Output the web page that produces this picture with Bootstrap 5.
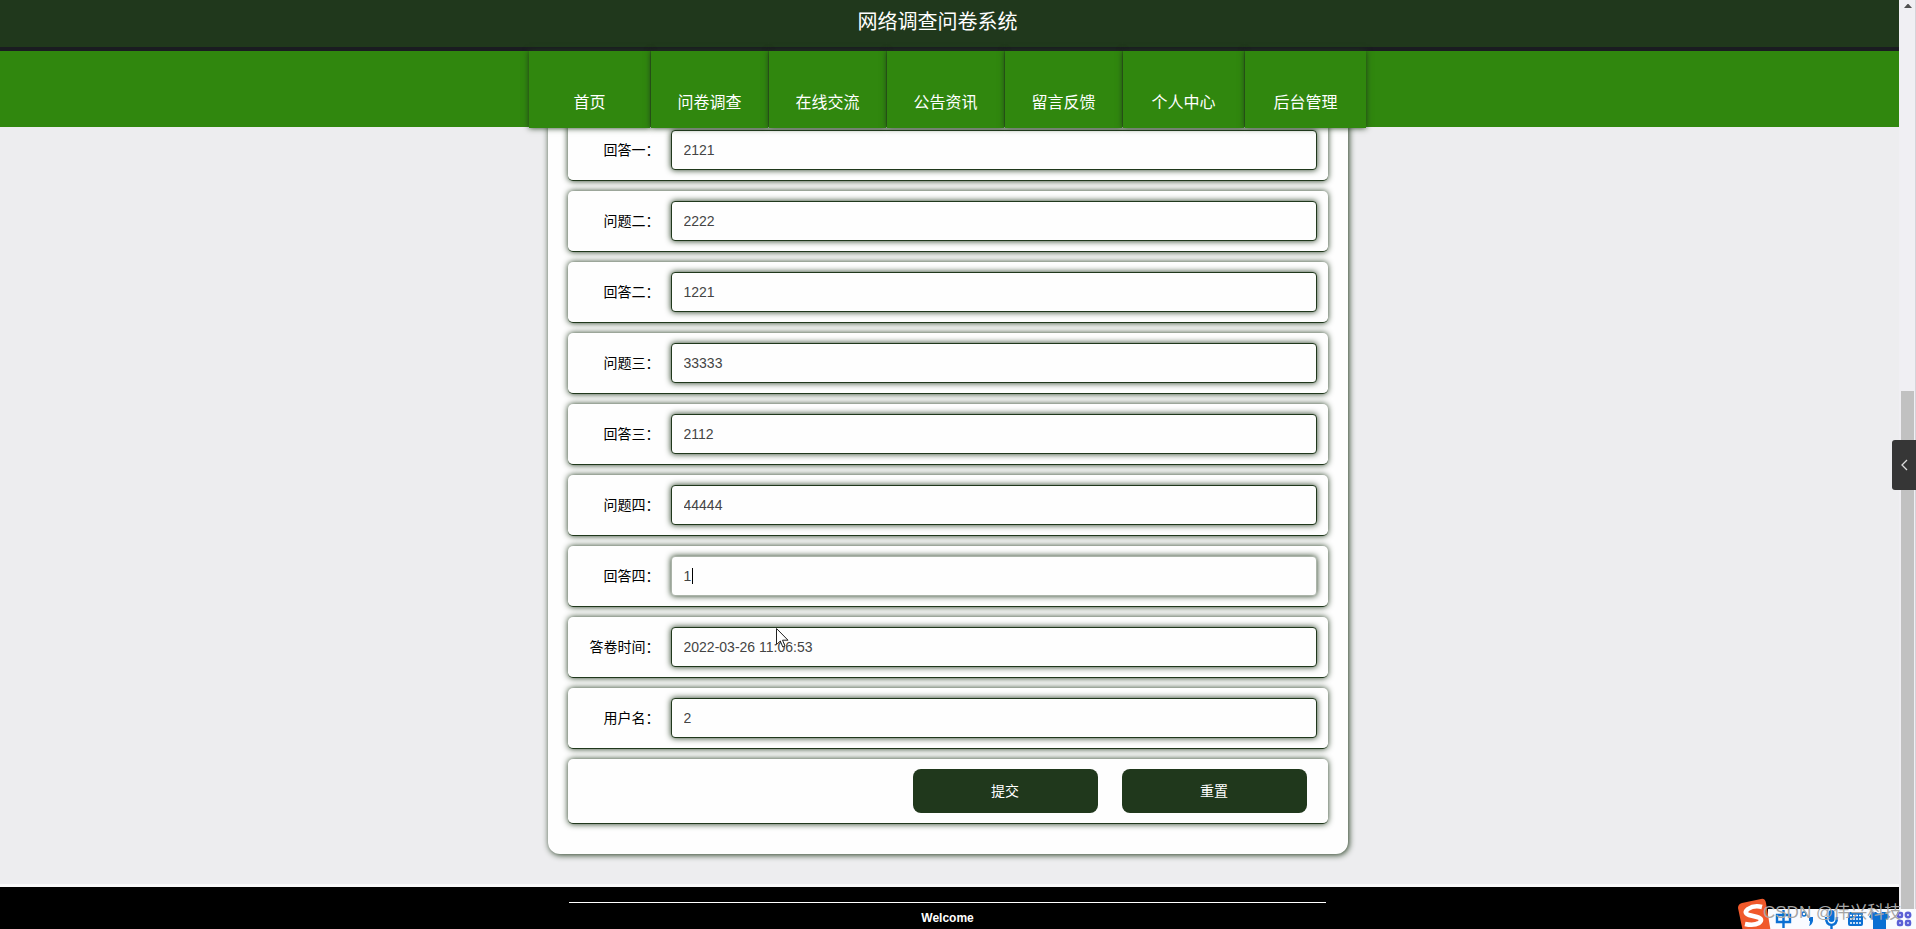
<!DOCTYPE html>
<html lang="zh-CN">
<head>
<meta charset="utf-8">
<meta name="viewport" content="width=device-width, initial-scale=1">
<title>网络调查问卷系统</title>
<link rel="stylesheet" href="https://cdn.jsdelivr.net/npm/bootstrap@5.3.0/dist/css/bootstrap.min.css">
<style>
:root { --forest: #20381c; --leaf: #30870e; }
body { font-family: "Liberation Sans", "Noto Sans CJK SC", sans-serif; font-size: 14px; line-height: 20px; color: #000; background: #ededef; }
.page-col { min-width: 0; }
.top-zone { z-index: 5; }
.site-title { background: var(--forest); border-bottom: 4px solid #1a1c21; height: 51px; font-size: 20px; line-height: 44px; padding-right: 24px; color: #fff; }
.site-nav { background: var(--leaf); height: 76px; }
.site-nav ul { gap: 1px; }
.site-nav a { display: block; min-width: 117px; height: 77px; padding: 40px 26px 0; font-size: 16px; line-height: 24px; text-align: center; color: #fff; text-decoration: none; background: var(--leaf); box-shadow: 0 0 6px var(--forest); }
.site-nav .wide-item a { min-width: 121px; }
.survey-card { width: 800px; max-width: 100%; margin-top: -8px; padding: 1px 20px 30px; background: #fefefe; border-radius: 0 0 12px 12px; box-shadow: 1px 1px 6px var(--forest); }
.survey-form { gap: 10px; }
.field-row { padding: 10px 11px 10px 0; background: #fefefe; border-bottom: 1px solid var(--forest); border-radius: 5px; box-shadow: 0 0 6px var(--forest); }
.field-row label { width: 92px; margin-right: 11px; text-align: right; flex: none; }
.field-row input { height: 40px; padding: 0 12px; font-size: 14px; color: #444; border: 1px solid var(--forest); border-radius: 4px; box-shadow: 0 0 6px var(--forest); background: #fefefe; min-width: 0; outline: 0; }
.field-row input.editing { border-color: #aab3a8; }
.field-row .cell { position: relative; display: flex; flex: 1; min-width: 0; }
.caret { position: absolute; left: 21px; top: 12px; width: 1px; height: 16px; background: #000; }
.pointer { position: absolute; left: 105px; top: 1px; }
.action-row { gap: 24px; padding-right: 21px; }
.action-row button { width: 185px; height: 44px; border: 0; border-radius: 8px; background: var(--forest); color: #fff; font-size: 14px; }
.site-foot { margin-top: 30px; border-top: 3px solid #fafafa; background: #000; color: #fff; font-size: 12px; font-weight: bold; }
.foot-rule { width: 757px; max-width: 100%; height: 1px; margin: 15px auto 5px; background: #fff; }
.scroll-track { width: 17px; flex: none; background: #f0eff3; border-right: 1px solid #d5d3d9; padding: 3px 1px 0 2px; }
.scroll-thumb { margin-top: 383px; background: #c1c1c1; }
.drawer-tab { position: absolute; right: 0; top: 440px; width: 24px; height: 50px; border: 0; padding: 0; border-radius: 3px 0 0 3px; background: #363636; z-index: 9; }
.ime { position: absolute; right: 0; bottom: 0; z-index: 8; }
</style>
</head>
<body>
<div class="d-flex vh-100 overflow-hidden position-relative">
  <div class="page-col flex-grow-1 d-flex flex-column">
    <header class="top-zone position-relative">
      <h1 class="site-title m-0 fw-normal text-center">网络调查问卷系统</h1>
      <nav class="site-nav pe-1">
        <ul class="list-unstyled d-flex justify-content-center m-0">
          <li class="wide-item"><a href="#">首页</a></li>
          <li><a href="#">问卷调查</a></li>
          <li><a href="#">在线交流</a></li>
          <li><a href="#">公告资讯</a></li>
          <li><a href="#">留言反馈</a></li>
          <li class="wide-item"><a href="#">个人中心</a></li>
          <li class="wide-item"><a href="#">后台管理</a></li>
        </ul>
      </nav>
    </header>
    <div class="pe-1">
    <main class="survey-card mx-auto">
      <form class="survey-form d-flex flex-column">
        <div class="field-row d-flex align-items-center"><label for="a1">回答一：</label><div class="cell"><input class="w-100" id="a1" type="text" value="2121"></div></div>
        <div class="field-row d-flex align-items-center"><label for="q2">问题二：</label><div class="cell"><input class="w-100" id="q2" type="text" value="2222"></div></div>
        <div class="field-row d-flex align-items-center"><label for="a2">回答二：</label><div class="cell"><input class="w-100" id="a2" type="text" value="1221"></div></div>
        <div class="field-row d-flex align-items-center"><label for="q3">问题三：</label><div class="cell"><input class="w-100" id="q3" type="text" value="33333"></div></div>
        <div class="field-row d-flex align-items-center"><label for="a3">回答三：</label><div class="cell"><input class="w-100" id="a3" type="text" value="2112"></div></div>
        <div class="field-row d-flex align-items-center"><label for="q4">问题四：</label><div class="cell"><input class="w-100" id="q4" type="text" value="44444"></div></div>
        <div class="field-row d-flex align-items-center"><label for="a4">回答四：</label><div class="cell"><input class="w-100 editing" id="a4" type="text" value="1"><span class="caret"></span></div></div>
        <div class="field-row d-flex align-items-center"><label for="when">答卷时间：</label><div class="cell"><input class="w-100" id="when" type="text" value="2022-03-26 11:06:53">
          <svg class="pointer" width="13" height="20" viewBox="0 0 13 20" aria-hidden="true"><path d="M.5.5v16l3.800-3.500 2.500 6 2.200-1-2.500-5.800h5.500z" fill="#fff" stroke="#222"/></svg></div></div>
        <div class="field-row d-flex align-items-center"><label for="user">用户名：</label><div class="cell"><input class="w-100" id="user" type="text" value="2"></div></div>
        <div class="field-row action-row d-flex justify-content-end"><button type="submit">提交</button><button type="reset">重置</button></div>
      </form>
    </main>
    </div>
    <footer class="site-foot flex-grow-1 text-center pe-1"><div class="foot-rule"></div>Welcome</footer>
  </div>
  <div class="scroll-track d-flex flex-column" aria-hidden="true">
    <svg width="14" height="5" viewBox="0 0 14 5"><path d="M3 5l3.500-4h1L11 5z" fill="#505050"/></svg>
    <div class="scroll-thumb flex-grow-1"></div>
  </div>
  <button class="drawer-tab" type="button" aria-label="展开"><svg width="24" height="50" viewBox="0 0 24 50"><path d="M15 20l-5 5 5 5" fill="none" stroke="#ddd" stroke-width="1.300"/></svg></button>
  <svg class="ime" width="180" height="31" viewBox="0 0 180 31" role="img" aria-label="输入法工具栏">
    <rect x="32" y="11" width="148" height="20" fill="#f9fbff"/>
    <path d="M6 2q-4 1-4 5L7 31h25q3-1 2-5L30 2q-1-5-5-4z" transform="translate(0 3)" fill="#f0592b"/>
    <path d="M26 9q-8-2-14 2-5 4 1 6l8 2q7 2 2 6-5 3-14 1" fill="none" stroke="#fff" stroke-width="4.500"/>
    <g fill="none" stroke="#0a6fd3" stroke-width="2.400">
      <path d="M41 17h13v7H41zM47.500 12v18"/><circle cx="68" cy="16" r="2" stroke-width="1.600"/>
      <path d="M90 19q0 8 5.500 8t5.500-8M95.500 27v4"/>
    </g>
    <g fill="#0a6fd3"><path d="M73 19h4v4q-1 4-4 5 1-2 1-5h-1z"/><rect x="92.500" y="12" width="6" height="12" rx="3"/><rect x="112" y="14" width="15" height="14" rx="2"/><path d="M136 14h4q3 3 6 0h4l4 5-4 3v9h-13v-9l-4-3z"/></g>
    <path d="M114 17.500h11M114 21h11M114 25h2M117 25h5M123 25h2" fill="none" stroke="#fff" stroke-width="1.600" stroke-dasharray="2 1"/>
    <g fill="none" stroke="#5b5fd6" stroke-width="2.500"><rect x="162" y="15" width="4" height="4" rx="1"/><circle cx="172" cy="17" r="2.200"/><rect x="162" y="23" width="4" height="4" rx="1"/><rect x="170" y="23" width="4" height="4" rx="1"/></g>
    <text x="27" y="20" font-size="17" fill="#a6a6a6" font-family="Liberation Sans, Noto Sans CJK SC, sans-serif">CSDN @伟兴科技</text>
  </svg>
</div>
<script src="https://cdn.jsdelivr.net/npm/bootstrap@5.3.0/dist/js/bootstrap.bundle.min.js"></script>
</body>
</html>
